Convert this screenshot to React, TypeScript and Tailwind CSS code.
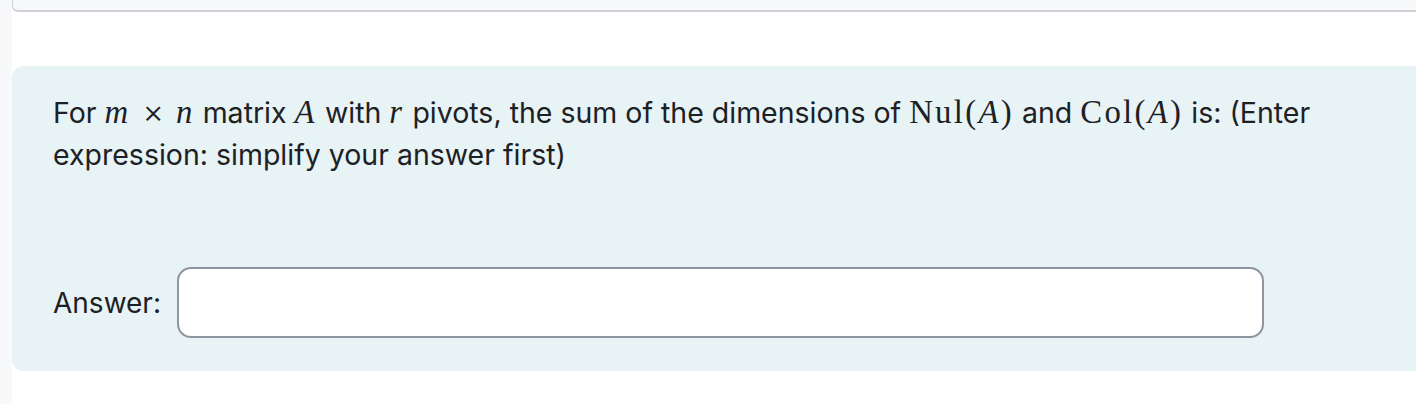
import React from 'react';

const M: React.FC<{ children: React.ReactNode; italic?: boolean }> = ({ children, italic = true }) => (
  <span
    className={`text-[1.15em] leading-none tracking-[0.07em] ${italic ? 'italic' : ''}`}
    style={{ fontFamily: '"Liberation Serif", "DejaVu Serif", serif' }}
  >
    {children}
  </span>
);

export default function App() {
  return (
    <div className="flex h-[404px] w-full overflow-hidden bg-white text-[#1d2125]" style={{ fontFamily: 'Inter, "Noto Sans", sans-serif' }}>
      <div className="w-[12px] shrink-0 bg-[#f8f9fa]" />
      <div className="flex min-w-0 flex-1 flex-col">
        <div className="h-[12px] w-[1500px] shrink-0 rounded-bl-[6px] border-b-2 border-l border-[#ced1d7] bg-[#f8f9fa]" />
        <div className="mt-[54px] h-[305px] w-[1500px] shrink-0 rounded-l-[12px] bg-[#e7f3f5] pl-[41px] pt-[24px]">
          <p className="w-[1340px] text-[28.5px] leading-[42px]">
            For <M>m</M> <span className="mx-[4px] text-[1.15em] font-light">×</span> <M>n</M> matrix <M>A</M> with <M>r</M> pivots, the sum of the dimensions of{' '}
            <M italic={false}>Nul(<i>A</i>)</M> and <M italic={false}>Col(<i>A</i>)</M> is: (Enter
            <br />
            expression: simplify your answer first)
          </p>
          <div className="mt-[91px] flex items-center gap-[16px]">
            <label className="text-[28px]">Answer:</label>
            <input
              type="text"
              className="h-[71px] w-[1087px] rounded-[14px] border-2 border-[#8f959e] bg-white px-4 text-[28px] outline-none"
            />
          </div>
        </div>
      </div>
    </div>
  );
}
